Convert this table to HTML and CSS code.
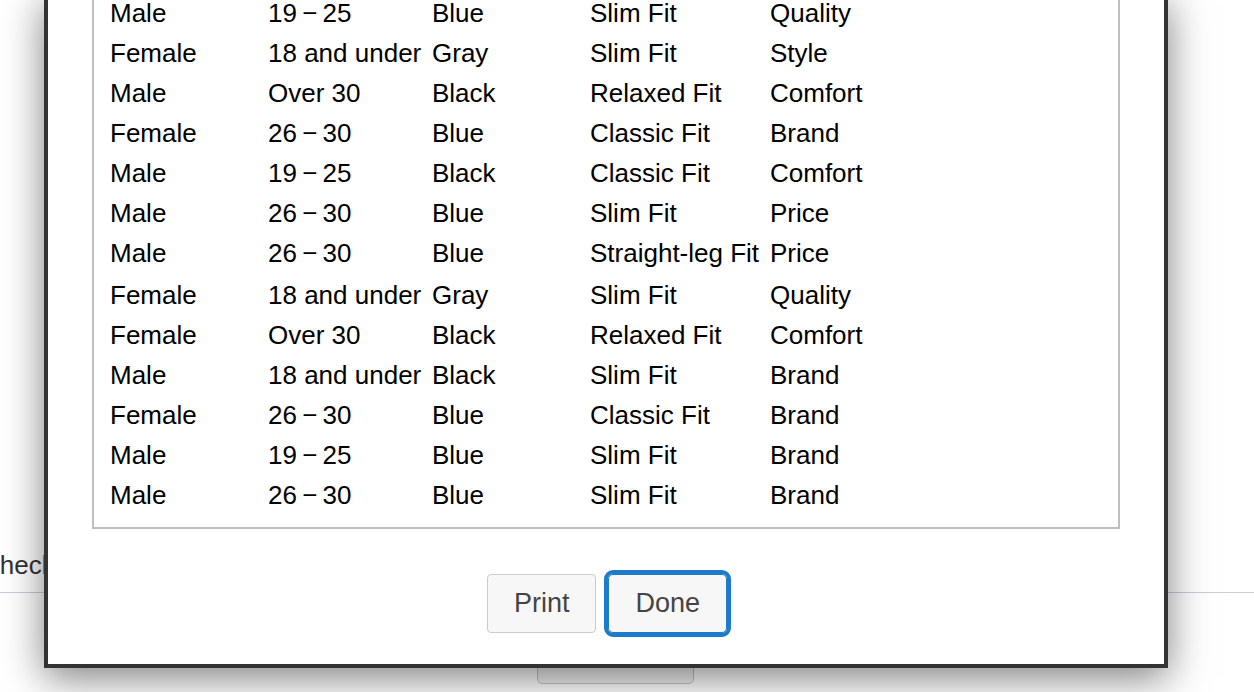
FILE: index.html
```html
<!DOCTYPE html>
<html lang="en">
<head>
<meta charset="utf-8">
<title>Survey results</title>
<link rel="stylesheet" href="styles.css">
</head>
<body>
  <div class="page">
    <div class="page-row"><span class="check">Check</span></div>
    <div class="rule"></div>
    <div class="page-actions"><button class="bg-btn" tabindex="-1"></button></div>
  </div>

  <div class="dialog" role="dialog">
    <div class="results">
      <div class="row"><span>Male</span><span class="range">19 − 25</span><span>Blue</span><span>Slim Fit</span><span>Quality</span></div>
      <div class="row"><span>Female</span><span>18 and under</span><span>Gray</span><span>Slim Fit</span><span>Style</span></div>
      <div class="row"><span>Male</span><span>Over 30</span><span>Black</span><span>Relaxed Fit</span><span>Comfort</span></div>
      <div class="row"><span>Female</span><span class="range">26 − 30</span><span>Blue</span><span>Classic Fit</span><span>Brand</span></div>
      <div class="row"><span>Male</span><span class="range">19 − 25</span><span>Black</span><span>Classic Fit</span><span>Comfort</span></div>
      <div class="row"><span>Male</span><span class="range">26 − 30</span><span>Blue</span><span>Slim Fit</span><span>Price</span></div>
      <div class="row"><span>Male</span><span class="range">26 − 30</span><span>Blue</span><span>Straight-leg Fit</span><span>Price</span></div>
      <div class="row row-gap"><span>Female</span><span>18 and under</span><span>Gray</span><span>Slim Fit</span><span>Quality</span></div>
      <div class="row"><span>Female</span><span>Over 30</span><span>Black</span><span>Relaxed Fit</span><span>Comfort</span></div>
      <div class="row"><span>Male</span><span>18 and under</span><span>Black</span><span>Slim Fit</span><span>Brand</span></div>
      <div class="row"><span>Female</span><span class="range">26 − 30</span><span>Blue</span><span>Classic Fit</span><span>Brand</span></div>
      <div class="row"><span>Male</span><span class="range">19 − 25</span><span>Blue</span><span>Slim Fit</span><span>Brand</span></div>
      <div class="row"><span>Male</span><span class="range">26 − 30</span><span>Blue</span><span>Slim Fit</span><span>Brand</span></div>
    </div>
    <div class="actions">
      <button class="btn">Print</button>
      <button class="btn btn-focus">Done</button>
    </div>
  </div>
</body>
</html>
```

FILE: styles.css
```css
html, body {
  margin: 0;
  padding: 0;
}

body {
  width: 1254px;
  height: 692px;
  overflow: hidden;
  position: relative;
  background: #ffffff;
  font-family: "Liberation Sans", Arial, sans-serif;
}

/* background page */
.page {
  padding-top: 550px;
}

.page-row {
  height: 30px;
  line-height: 30px;
  font-size: 26px;
  color: #333333;
}

.check {
  display: inline-block;
  margin-left: -19px;
}

.rule {
  margin-top: 12px;
  height: 1px;
  background: #c9cddd;
}

.page-actions {
  display: flex;
  padding-left: 537px;
  margin-top: 27px;
}

.bg-btn {
  width: 157px;
  height: 64px;
  border: 1px solid #c6c6c6;
  border-radius: 5px;
  background: #f4f4f4;
}

/* dialog overlay */
.dialog {
  position: absolute;
  left: 44px;
  bottom: 24px;
  width: 1124px;
  box-sizing: border-box;
  border: 4px solid #333333;
  border-top: none;
  background: #ffffff;
  padding: 0 44px 31px;
  box-shadow: 0 10px 38px rgba(0, 0, 0, 0.5);
}

.results {
  border: 2px solid #bfbfbf;
  border-top: none;
  padding: 0 0 12px 16px;
  font-size: 26px;
  color: #000000;
}

.row {
  display: grid;
  grid-template-columns: 158px 164px 158px 180px 1fr;
  height: 40px;
  line-height: 40px;
  white-space: nowrap;
}

.range {
  word-spacing: -2px;
}

.row-gap {
  margin-top: 2px;
}

.actions {
  display: flex;
  justify-content: center;
  align-items: center;
  gap: 12px;
  margin-top: 45px;
  padding-left: 2px;
}

.btn {
  height: 59px;
  padding: 0 26px;
  border: 1px solid #cccccc;
  border-radius: 4px;
  background: #f7f7f7;
  color: #444444;
  font-family: "Liberation Sans", Arial, sans-serif;
  font-size: 27px;
  line-height: 57px;
}

.btn-focus {
  border-color: #1d7bc9;
  outline: 4px solid #1d7bc9;
  outline-offset: 0;
  border-radius: 5px;
}
```
